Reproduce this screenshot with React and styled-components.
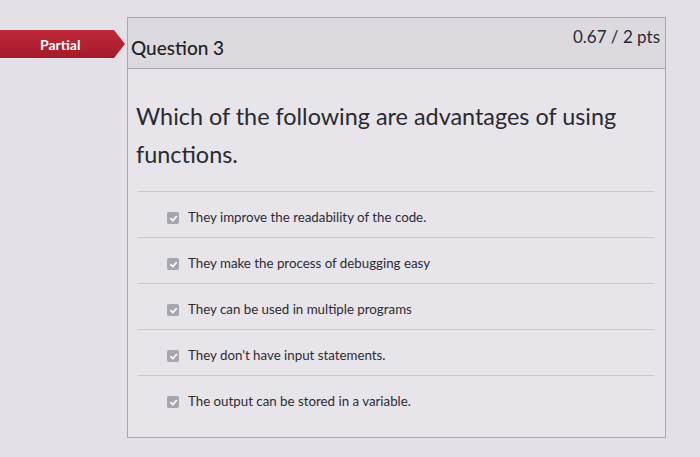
import React from 'react';
import styled, { createGlobalStyle } from 'styled-components';

const answers = [
  'They improve the readability of the code.',
  'They make the process of debugging easy',
  'They can be used in multiple programs',
  "They don't have input statements.",
  'The output can be stored in a variable.',
];

const GlobalStyle = createGlobalStyle`
  html, body {
    margin: 0;
    background: #e4e0e7;
  }
  body {
    font-family: Lato, 'Open Sans', sans-serif;
    color: #2d3b45;
  }
`;

const App = () => {
  return (
    <Page>
      <GlobalStyle />
      <Side>
        <Badge>Partial</Badge>
      </Side>
      <Card>
        <Header>
          <Title>Question 3</Title>
          <Points>0.67 / 2 pts</Points>
        </Header>
        <Body>
          <QuestionText>
            Which of the following are advantages of using functions.
          </QuestionText>
          <AnswerList>
            {answers.map((text) => (
              <Answer key={text}>
                <Check>
                  <svg width='9' height='9' viewBox='0 0 10 10'>
                    <path d='M2 5.2 L4.2 7.4 L8.2 2.8' fill='none' stroke='#fff' strokeWidth='1.8' strokeLinecap='round' strokeLinejoin='round' />
                  </svg>
                </Check>
                <span>{text}</span>
              </Answer>
            ))}
          </AnswerList>
        </Body>
      </Card>
    </Page>
  );
};

export default App;

const Page = styled.div`
  display: grid;
  grid-template-columns: 127px 539px;
  padding-top: 17px;
  height: 457px;
  box-sizing: border-box;
`;

const Side = styled.div`
  padding-top: 13px;
`;

const Badge = styled.div`
  height: 28px;
  width: 125px;
  box-sizing: border-box;
  padding-left: 40px;
  display: flex;
  align-items: center;
  background: linear-gradient(#c02a3a, #a51a2a);
  color: #fff;
  font-weight: 700;
  font-size: 14px;
  clip-path: polygon(0 0, 114px 0, 125px 50%, 114px 100%, 0 100%);
`;

const Card = styled.div`
  height: 421px;
  box-sizing: border-box;
  border: 1px solid #a9a7ae;
  background: #e7e4ea;
  display: flex;
  flex-direction: column;
`;

const Header = styled.div`
  height: 51px;
  box-sizing: border-box;
  background: #dcd9df;
  border-bottom: 1px solid #a9a7ae;
  display: flex;
  justify-content: space-between;
  align-items: flex-start;
  padding: 0 5px 0 3px;
`;

const Title = styled.h2`
  margin: 18px 0 0;
  font-size: 19px;
  font-weight: 500;
  color: #1f1f24;
`;

const Points = styled.div`
  margin-top: 8px;
  font-size: 17px;
  color: #2a2a2e;
`;

const Body = styled.div`
  padding: 28px 11px 0 8px;
`;

const QuestionText = styled.p`
  margin: 0 0 18px;
  width: 500px;
  font-size: 23.4px;
  line-height: 38px;
  color: #2a2a30;
`;

const AnswerList = styled.div`
  margin-left: 2px;
  border-top: 1px solid #c9c7cd;
`;

const Answer = styled.div`
  height: 46px;
  box-sizing: border-box;
  padding: 17px 0 0 29px;
  display: flex;
  align-items: flex-start;
  gap: 9px;
  font-size: 13.3px;
  color: #2c2c32;
  border-bottom: 1px solid #c9c7cd;
  &:last-child {
    border-bottom: none;
  }
`;

const Check = styled.span`
  margin-top: 3px;
  width: 12px;
  height: 12px;
  border-radius: 2px;
  background: #a7a6ad;
  display: flex;
  align-items: center;
  justify-content: center;
  flex-shrink: 0;
`;
